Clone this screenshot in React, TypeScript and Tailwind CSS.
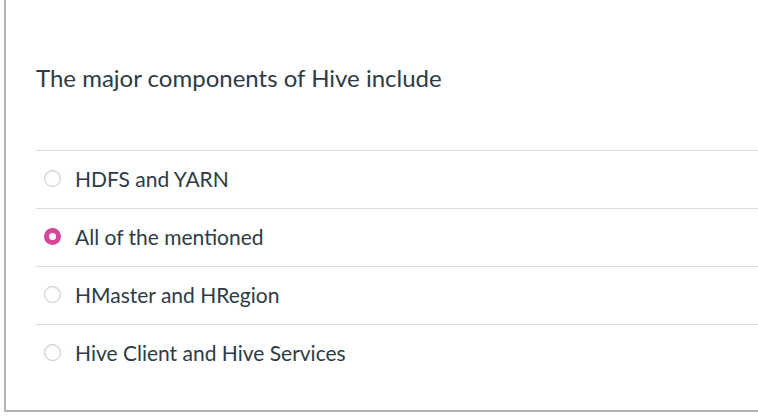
const options = [
  { label: 'HDFS and YARN', selected: false },
  { label: 'All of the mentioned', selected: true },
  { label: 'HMaster and HRegion', selected: false },
  { label: 'Hive Client and Hive Services', selected: false },
];

function Radio({ selected }: { selected: boolean }) {
  if (selected) {
    return (
      <span className="flex h-[17px] w-[17px] items-center justify-center rounded-full bg-[#d9449b]">
        <span className="h-[7px] w-[7px] rounded-full bg-white" />
      </span>
    );
  }
  return (
    <span className="h-[17px] w-[17px] rounded-full border border-[#c8c8c8] bg-white shadow-[inset_0_1px_2px_rgba(0,0,0,0.08)]" />
  );
}

export default function App() {
  return (
    <div className="h-[416px] w-[758px] overflow-hidden bg-white font-['Lato','Noto_Sans',sans-serif] text-[#2d3b45]">
      <div className="ml-[4px] h-[412px] w-[800px] border-b-2 border-l-2 border-[#b4b4b4] pl-[30px]">
        <div className="pt-[64px] text-[24px] leading-[28px]">The major components of Hive include</div>
        <div className="mt-[58px]">
          {options.map((o) => (
            <div
              key={o.label}
              className="flex h-[58px] items-center border-t border-[#dcdcdc] pb-[2px] pl-[8px]"
            >
              <Radio selected={o.selected} />
              <span className="ml-[14px] text-[21px] leading-[24px]">{o.label}</span>
            </div>
          ))}
        </div>
      </div>
    </div>
  );
}
